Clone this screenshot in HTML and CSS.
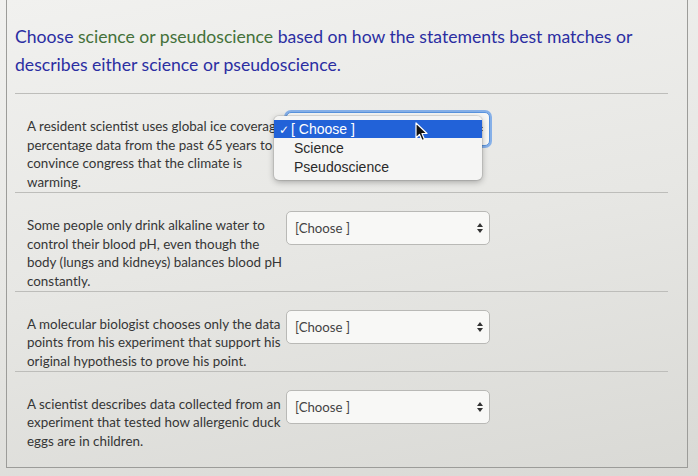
FILE: index.html
```html
<!DOCTYPE html>
<html lang="en">
<head>
  <meta charset="UTF-8" />
  <title>Quiz Question</title>
  <link rel="stylesheet" href="styles.css">
</head>
<body>
  <div class="question">
    <p class="prompt"><span>Choose</span> <span class="term">science or pseudoscience</span> <span>based on how the statements best matches or</span> <span>describes either science or pseudoscience.</span></p>

    <div class="answers">
      <div class="answer">
        <p class="statement">A resident scientist uses global ice coverage percentage data from the past 65 years to convince congress that the climate is warming.</p>
        <div class="picker open">
          <svg class="picker-arrows" width="6" height="10" viewBox="0 0 6 10"><path d="M3 0 L6 4 L0 4 Z M0 6 L6 6 L3 10 Z" fill="#333"/></svg>
          <ul class="menu">
            <li class="menu-item selected"><span class="check">&#10003;</span>[ Choose ]</li>
            <li class="menu-item">Science</li>
            <li class="menu-item">Pseudoscience</li>
          </ul>
          <!-- mouse pointer hovering the open menu -->
          <svg class="pointer" width="13" height="20" viewBox="0 0 13 20">
            <path d="M1 1 L1 16 L4.5 12.5 L7 18.5 L9.5 17.5 L7 11.5 L12 11.5 Z" fill="#111" stroke="#fff" stroke-width="1.2" stroke-linejoin="round"/>
          </svg>
        </div>
      </div>

      <div class="answer">
        <p class="statement">Some people only drink alkaline water to control their blood pH, even though the body (lungs and kidneys) balances blood pH constantly.</p>
        <div class="picker">
          <span class="picker-label">[Choose ]</span>
          <svg class="picker-arrows" width="6" height="10" viewBox="0 0 6 10"><path d="M3 0 L6 4 L0 4 Z M0 6 L6 6 L3 10 Z" fill="#333"/></svg>
        </div>
      </div>

      <div class="answer">
        <p class="statement">A molecular biologist chooses only the data points from his experiment that support his original hypothesis to prove his point.</p>
        <div class="picker">
          <span class="picker-label">[Choose ]</span>
          <svg class="picker-arrows" width="6" height="10" viewBox="0 0 6 10"><path d="M3 0 L6 4 L0 4 Z M0 6 L6 6 L3 10 Z" fill="#333"/></svg>
        </div>
      </div>

      <div class="answer">
        <p class="statement">A scientist describes data collected from an experiment that tested how allergenic duck eggs are in children.</p>
        <div class="picker">
          <span class="picker-label">[Choose ]</span>
          <svg class="picker-arrows" width="6" height="10" viewBox="0 0 6 10"><path d="M3 0 L6 4 L0 4 Z M0 6 L6 6 L3 10 Z" fill="#333"/></svg>
        </div>
      </div>
    </div>
  </div>
</body>
</html>
```

FILE: styles.css
```css
html, body {
  margin: 0;
  height: 100%;
}
body {
  font-family: Lato, "Open Sans", sans-serif;
  background: linear-gradient(170deg, #f1f1ef 0%, #e7e7e4 50%, #d9d9d5 100%);
  color: #363636;
  overflow: hidden;
}
.question {
  margin-left: 6px;
  width: 653px;
  padding: 23px 19px 0 8px;
  border: 1px solid #9c9c99;
  border-top: none;
}
.prompt {
  margin: 0;
  padding-bottom: 14px;
  font-size: 17.6px;
  line-height: 28px;
  color: #2b2ea2;
}
.term {
  color: #44713a;
}
.answer {
  display: flex;
  align-items: flex-start;
  padding: 18px 0 0 12px;
  border-top: 1px solid #bdbdba;
}
.answer:last-child {
  padding-bottom: 16px;
}
.statement {
  margin: 0;
  padding-top: 5px;
  width: 256px;
  font-size: 13.4px;
  line-height: 18.7px;
}
.answer:first-child .statement {
  width: 262px;
  margin-right: -6px;
}
.picker {
  position: relative;
  box-sizing: border-box;
  margin-left: 3px;
  width: 204px;
  height: 34px;
  display: flex;
  align-items: center;
  justify-content: space-between;
  padding: 0 6px 0 8px;
  background: #f8f8f6;
  border: 1px solid #b9b9b6;
  border-radius: 5px;
  font-size: 13.2px;
  color: #444;
}
.picker.open {
  justify-content: flex-end;
  border-color: #5a94de;
  box-shadow: 0 0 0 2px #86b0e8;
}
.menu {
  position: absolute;
  left: -13px;
  top: 3px;
  width: 208px;
  margin: 0;
  padding: 4px 0;
  list-style: none;
  background: #f5f5f4;
  border-radius: 5px;
  box-shadow: 0 2px 6px rgba(0, 0, 0, 0.3), 0 0 0 1px rgba(0, 0, 0, 0.08);
  font-family: "Liberation Sans", Arial, sans-serif;
  font-size: 14px;
  color: #2a2a2a;
}
.menu-item {
  height: 18px;
  line-height: 18px;
  padding-left: 20px;
}
.menu-item + .menu-item {
  margin-top: 1px;
}
.menu-item.selected {
  height: 18px;
  line-height: 18px;
  padding-left: 5px;
  background: #2262d8;
  color: #fff;
}
.check {
  display: inline-block;
  width: 12px;
  font-family: "DejaVu Sans", sans-serif;
  font-size: 12px;
  font-weight: bold;
}
.pointer {
  position: absolute;
  left: 128px;
  top: 9px;
}
```
